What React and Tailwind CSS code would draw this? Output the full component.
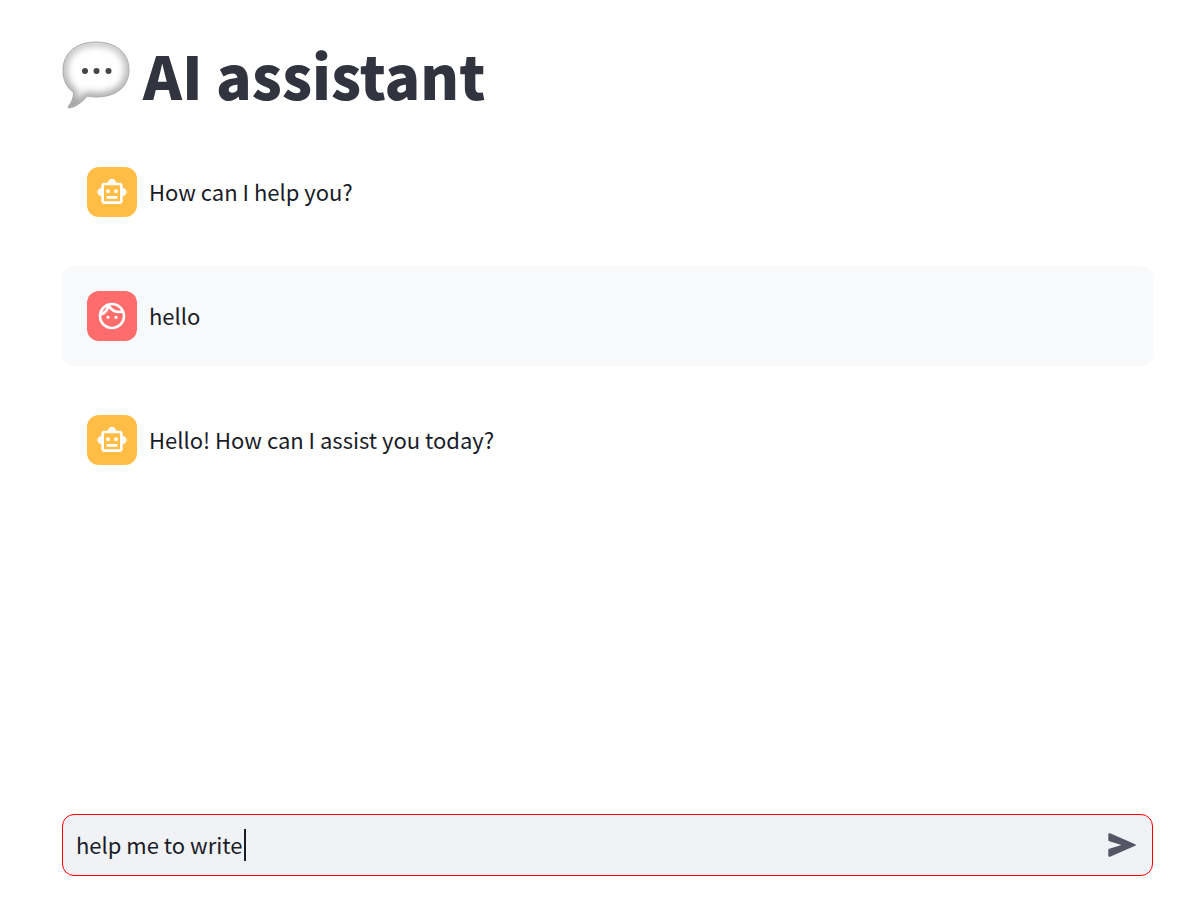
import { useState } from "react";
import { MdOutlineFace, MdOutlineSmartToy } from "react-icons/md";

const messages = [
  { role: "assistant", text: "How can I help you?" },
  { role: "user", text: "hello" },
  { role: "assistant", text: "Hello! How can I assist you today?" },
];

const BALLOON =
  "M34 1C54 1 67 12 67 28.500C67 46 54 56 34 56C31 56 28 55.700 25 55C20 62 13 66 7.500 67C6 67.200 5.500 66 6.500 65C9.500 61.500 11.500 57 11.500 51.500C4.500 46.500 1 39 1 29.500C1 12 14 1 34 1Z";

function SpeechBalloon() {
  return (
    <svg className="h-[68px] w-[68px] shrink-0" viewBox="0 0 68 68" aria-hidden="true">
      <defs>
        <clipPath id="balloon-clip">
          <path d={BALLOON} />
        </clipPath>
        <filter id="soft" x="-20%" y="-20%" width="140%" height="140%">
          <feGaussianBlur stdDeviation="3.500" />
        </filter>
        <linearGradient id="shade" x1="0" y1="0" x2="0" y2="1">
          <stop offset="0" stopColor="#c4c4c4" />
          <stop offset="1" stopColor="#9c9c9c" />
        </linearGradient>
      </defs>
      <path d={BALLOON} fill="#ffffff" />
      <g clipPath="url(#balloon-clip)">
        <path d={BALLOON} fill="none" stroke="url(#shade)" strokeWidth="8" filter="url(#soft)" />
      </g>
      <path d={BALLOON} fill="none" stroke="#a6a6a6" strokeWidth="0.9" />
      <circle cx="23" cy="30" r="3" fill="#454545" />
      <circle cx="34.500" cy="30" r="3" fill="#454545" />
      <circle cx="46.500" cy="30" r="3" fill="#454545" />
    </svg>
  );
}

function Message({ role, text }) {
  const isUser = role === "user";
  const Icon = isUser ? MdOutlineFace : MdOutlineSmartToy;
  return (
    <li className={`flex items-center gap-3 rounded-xl p-[25px] ${isUser ? "bg-[#f8f9fb]" : ""}`}>
      <span
        className={`flex size-[50px] shrink-0 items-center justify-center rounded-xl text-white ${
          isUser ? "bg-[#ff6c6c]" : "bg-[#ffbd45]"
        }`}
      >
        <Icon className="size-8" aria-hidden="true" />
      </span>
      <p className="pb-0.5">{text}</p>
    </li>
  );
}

export default function App() {
  const [draft, setDraft] = useState("help me to write");
  return (
    <main className="flex min-h-screen flex-col bg-white pt-8 pr-[47px] pb-10 pl-[62px] font-['Noto_Sans_CJK_SC','Noto_Sans',sans-serif] text-[22px] leading-8 text-[#1a1c28]">
      <h1 className="flex items-center gap-[13px] text-[59px] leading-[86px] font-black text-[#31333f]">
        <SpeechBalloon />
        AI assistant
      </h1>
      <ul className="mt-6 flex flex-col gap-6">
        {messages.map((m, i) => (
          <Message key={i} role={m.role} text={m.text} />
        ))}
      </ul>
      <form
        className="mt-auto flex h-[62px] items-center rounded-xl border border-[#ff0000] bg-[#f0f2f6] pr-4 pl-[13px]"
        onSubmit={(e) => e.preventDefault()}
      >
        <label className="flex min-w-0 flex-1 items-center gap-0.5">
          <input
            className="field-sizing-content max-w-full pb-0.5 caret-transparent outline-none"
            aria-label="Message"
            value={draft}
            onChange={(e) => setDraft(e.target.value)}
          />
          <span className="h-8 w-0.5 shrink-0 bg-[#1a1c28]" />
        </label>
        <button type="submit" aria-label="Send message" className="text-[#555566]">
          <svg className="h-6 w-7" viewBox="0 0 28 24" fill="currentColor" aria-hidden="true">
            <path d="M.3 1.400C.3.400 1.200-.1 2.100.3L27.200 11.200C28 11.600 28 12.400 27.200 12.800L2.100 23.700C1.200 24.100.3 23.600.3 22.600V17C.3 16.300.7 15.900 1.300 15.700L13.500 12L1.300 8.300C.7 8.100.3 7.700.3 7Z" />
          </svg>
        </button>
      </form>
    </main>
  );
}
